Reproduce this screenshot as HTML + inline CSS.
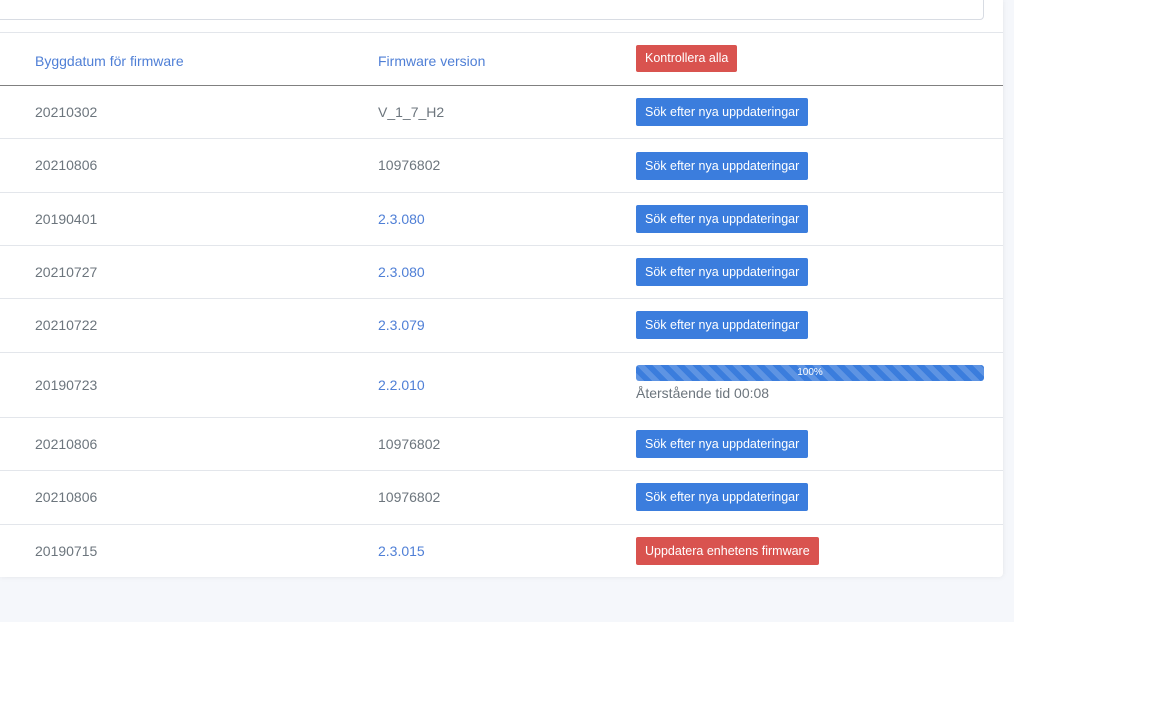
<!DOCTYPE html>
<html><head><meta charset="utf-8"><style>
body{margin:0;width:1152px;height:720px;background:#fff;font-family:"Liberation Sans",sans-serif;position:relative;overflow:hidden}
.bg{position:absolute;left:0;top:0;width:1014px;height:622px;background:#f5f7fb}
.card{position:absolute;left:0;top:0;width:1003px;height:577px;background:#fff;border-radius:0 0 4px 0;box-shadow:0 0 6px rgba(0,0,0,.08)}
.inp{position:absolute;left:-5px;top:-5px;width:987px;height:23px;border:1px solid #d8dce3;border-radius:4px}
.row{position:absolute;left:0;width:1003px;border-top:1px solid #e3e6eb}
.c{position:absolute;font-size:14px;color:#6c757d}
.h{color:#4f7fd6}
.lk{color:#4f7fd6}
.btn{position:absolute;left:636px;height:28px;line-height:28px;padding:0 9px;color:#fff;font-size:12.5px;border-radius:2px}
.b{background:#3b7ddd}.r{background:#d9534f}
.prog{position:absolute;left:636px;top:365px;width:348px;height:16px;border-radius:3px;background-color:#3b7ddd;background-image:linear-gradient(45deg,rgba(255,255,255,.18) 25%,transparent 25%,transparent 50%,rgba(255,255,255,.18) 50%,rgba(255,255,255,.18) 75%,transparent 75%);background-size:16px 16px;color:#fff;font-size:10px;text-align:center;line-height:15px}
</style></head><body>
<div class="bg"></div>
<div class="card">
<div class="inp"></div>
<div class="row" style="top:32px"></div>
<div class="c h" style="left:35px;top:53px">Byggdatum för firmware</div>
<div class="c h" style="left:378px;top:53px">Firmware version</div>
<div class="btn r" style="top:45px;height:27px;line-height:27px">Kontrollera alla</div>
<div class="row" style="top:85px;border-top:1px solid #808080"></div>

<div class="c" style="left:35px;top:104px">20210302</div><div class="c" style="left:378px;top:104px">V_1_7_H2</div><div class="btn b" style="top:98px">Sök efter nya uppdateringar</div>
<div class="row" style="top:138px"></div>
<div class="c" style="left:35px;top:157px">20210806</div><div class="c" style="left:378px;top:157px">10976802</div><div class="btn b" style="top:152px">Sök efter nya uppdateringar</div>
<div class="row" style="top:192px"></div>
<div class="c" style="left:35px;top:211px">20190401</div><div class="c lk" style="left:378px;top:211px">2.3.080</div><div class="btn b" style="top:205px">Sök efter nya uppdateringar</div>
<div class="row" style="top:245px"></div>
<div class="c" style="left:35px;top:264px">20210727</div><div class="c lk" style="left:378px;top:264px">2.3.080</div><div class="btn b" style="top:258px">Sök efter nya uppdateringar</div>
<div class="row" style="top:298px"></div>
<div class="c" style="left:35px;top:317px">20210722</div><div class="c lk" style="left:378px;top:317px">2.3.079</div><div class="btn b" style="top:311px">Sök efter nya uppdateringar</div>
<div class="row" style="top:352px"></div>
<div class="c" style="left:35px;top:377px">20190723</div><div class="c lk" style="left:378px;top:377px">2.2.010</div>
<div class="prog">100%</div>
<div class="c" style="left:636px;top:385px">Återstående tid 00:08</div>
<div class="row" style="top:417px"></div>
<div class="c" style="left:35px;top:436px">20210806</div><div class="c" style="left:378px;top:436px">10976802</div><div class="btn b" style="top:430px">Sök efter nya uppdateringar</div>
<div class="row" style="top:470px"></div>
<div class="c" style="left:35px;top:489px">20210806</div><div class="c" style="left:378px;top:489px">10976802</div><div class="btn b" style="top:483px">Sök efter nya uppdateringar</div>
<div class="row" style="top:524px"></div>
<div class="c" style="left:35px;top:543px">20190715</div><div class="c lk" style="left:378px;top:543px">2.3.015</div><div class="btn r" style="top:537px">Uppdatera enhetens firmware</div>
</div>
</body></html>
